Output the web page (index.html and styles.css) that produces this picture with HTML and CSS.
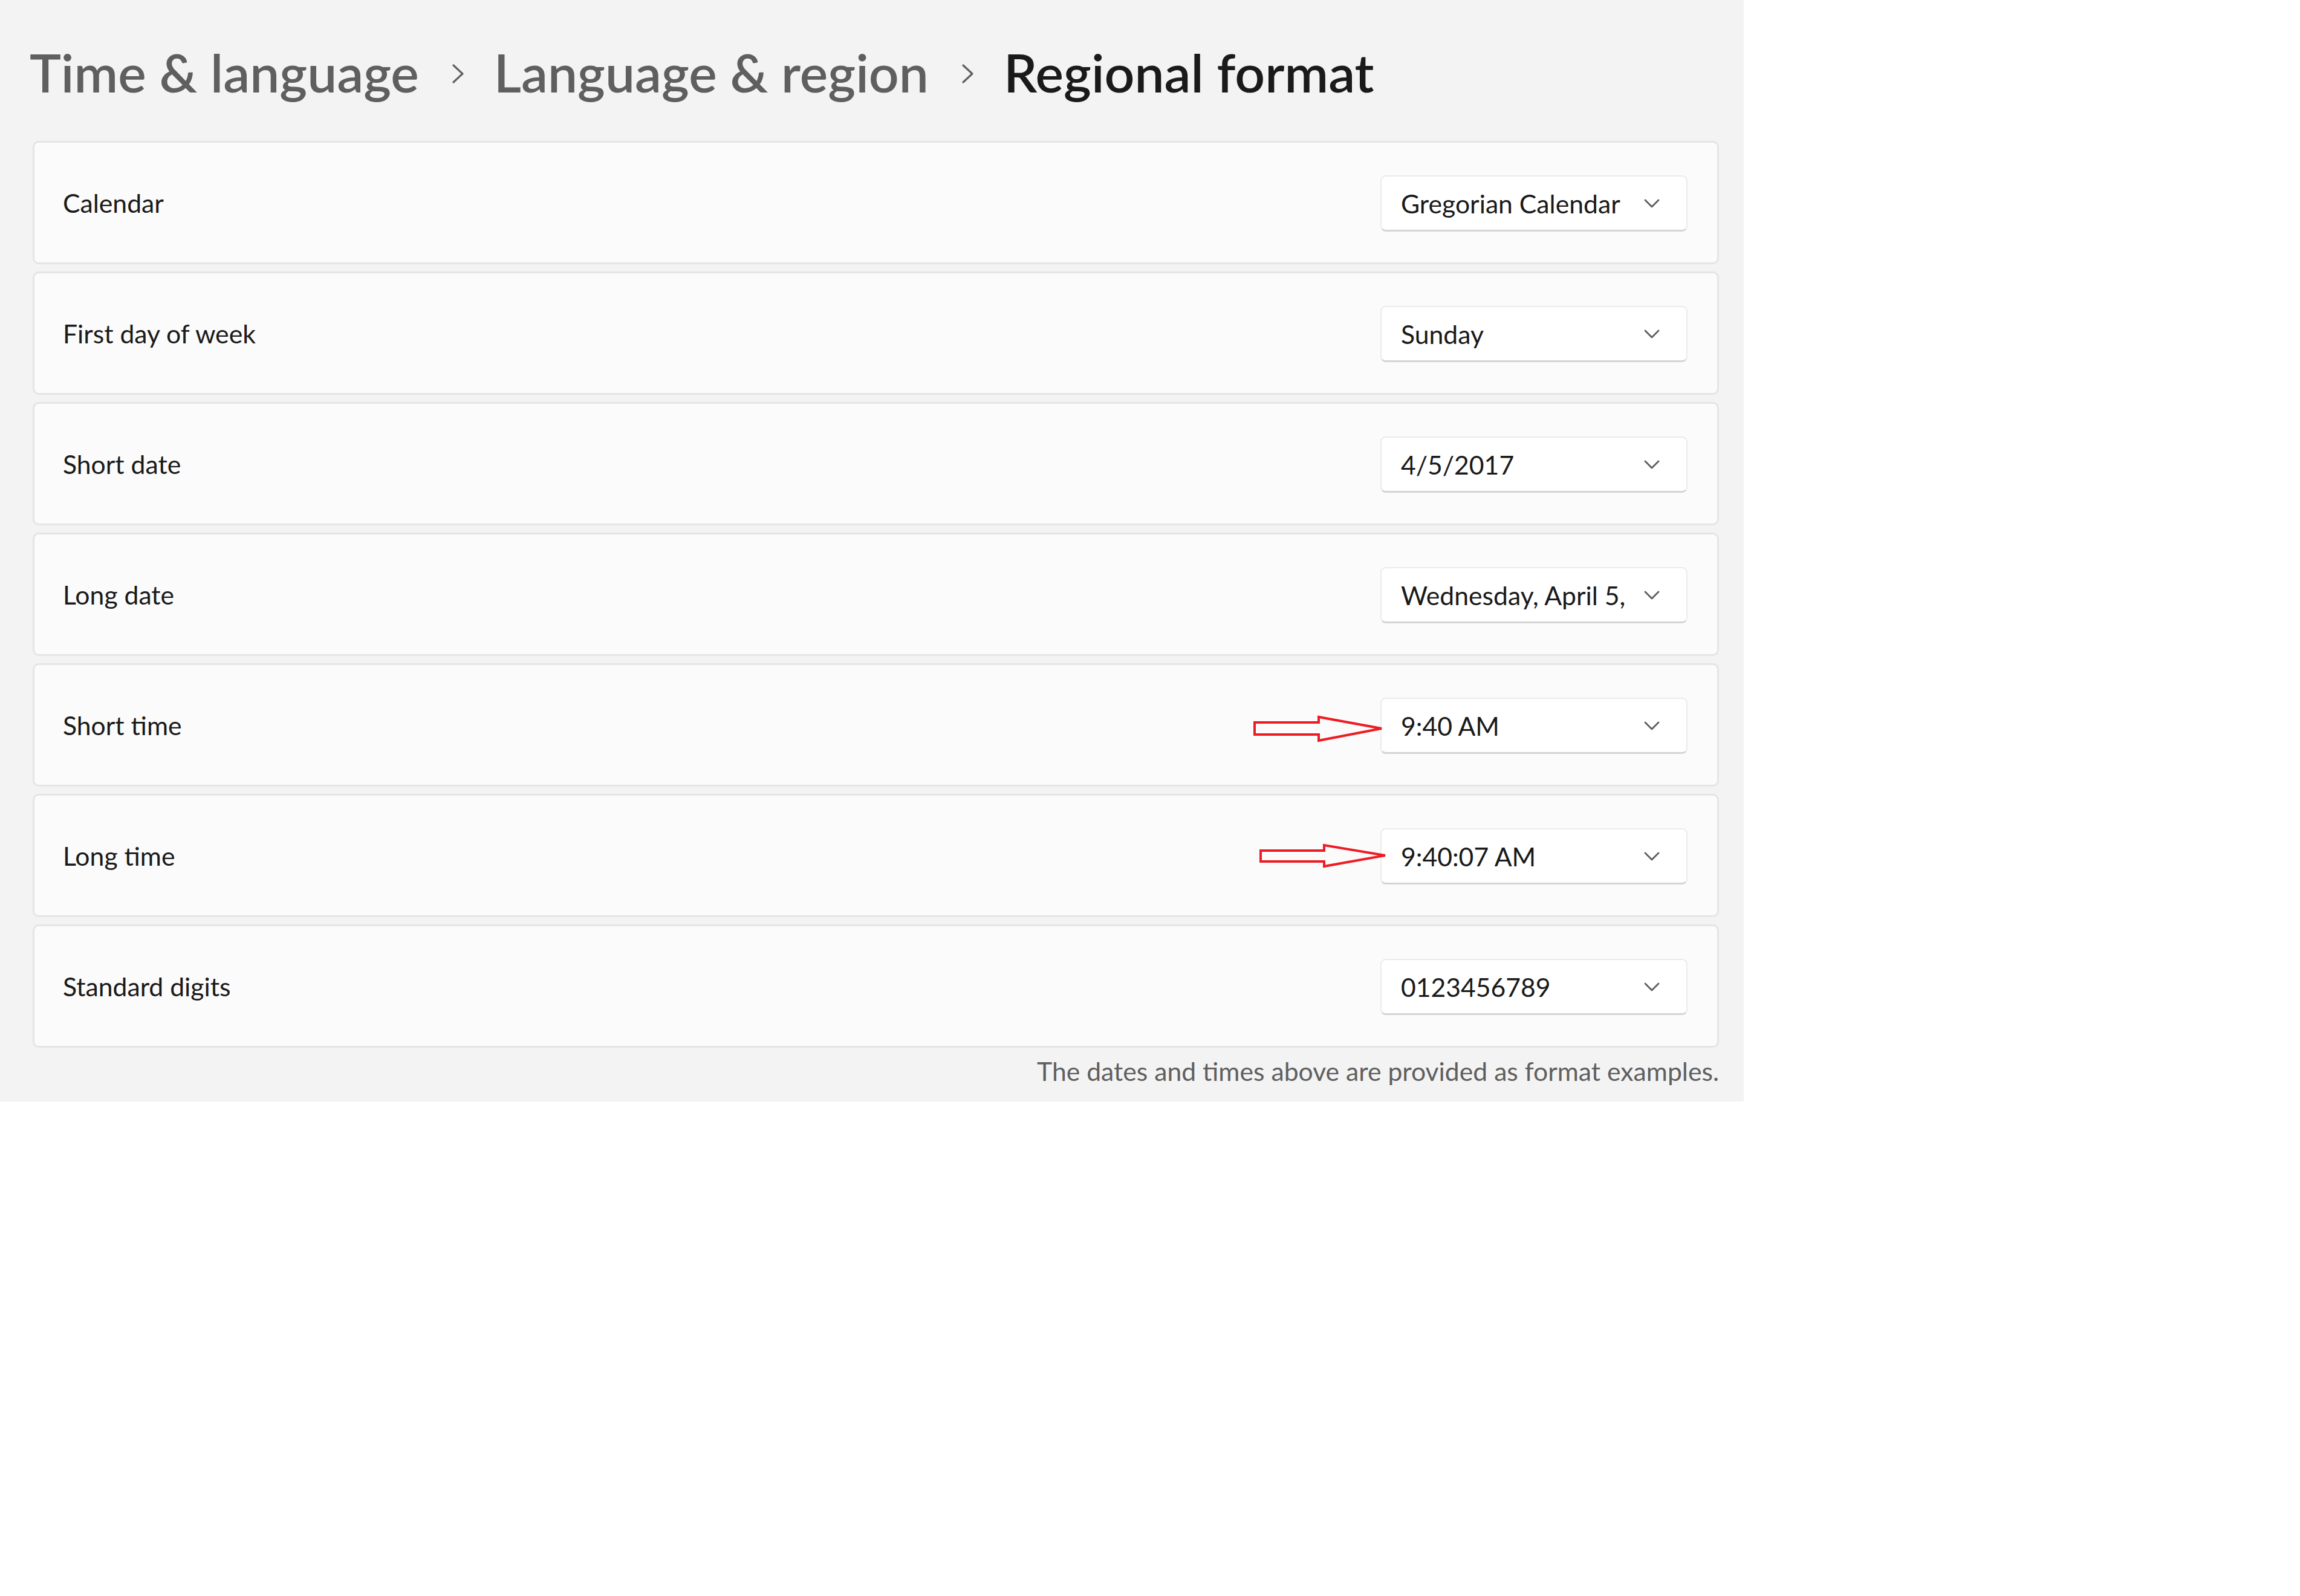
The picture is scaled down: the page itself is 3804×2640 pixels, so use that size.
FILE: index.html
```html
<!DOCTYPE html>
<html lang="en">
<head>
    <meta charset="UTF-8">
    <title>Regional format</title>
    <link rel="stylesheet" href="styles.css">
</head>
<body>
    <div class="settings">
        <nav class="breadcrumb">
            <span class="crumb">Time &amp; language</span>
            <svg class="crumb-sep" viewBox="0 0 22 34"><polyline points="3,3 18,17 3,31"/></svg>
            <span class="crumb">Language &amp; region</span>
            <svg class="crumb-sep" viewBox="0 0 22 34"><polyline points="3,3 18,17 3,31"/></svg>
            <span class="crumb current">Regional format</span>
        </nav>

        <div class="card-list">
            <div class="card">
                <span class="card-label">Calendar</span>
                <div class="combo">
                    <span class="combo-value">Gregorian Calendar</span>
                    <svg class="combo-chevron" viewBox="0 0 26 15"><polyline points="2,2 13,13 24,2"/></svg>
                </div>
            </div>
            <div class="card">
                <span class="card-label">First day of week</span>
                <div class="combo">
                    <span class="combo-value">Sunday</span>
                    <svg class="combo-chevron" viewBox="0 0 26 15"><polyline points="2,2 13,13 24,2"/></svg>
                </div>
            </div>
            <div class="card">
                <span class="card-label">Short date</span>
                <div class="combo">
                    <span class="combo-value">4/5/2017</span>
                    <svg class="combo-chevron" viewBox="0 0 26 15"><polyline points="2,2 13,13 24,2"/></svg>
                </div>
            </div>
            <div class="card">
                <span class="card-label">Long date</span>
                <div class="combo">
                    <span class="combo-value">Wednesday, April 5, 2017</span>
                    <svg class="combo-chevron" viewBox="0 0 26 15"><polyline points="2,2 13,13 24,2"/></svg>
                </div>
            </div>
            <div class="card">
                <span class="card-label">Short time</span>
                <!-- annotation arrow -->
                <svg class="arrow arrow-short" viewBox="0 0 224 52"><polygon points="6,15 112,15 112,6 216,25 112,45 112,35 6,35"/></svg>
                <div class="combo">
                    <span class="combo-value">9:40 AM</span>
                    <svg class="combo-chevron" viewBox="0 0 26 15"><polyline points="2,2 13,13 24,2"/></svg>
                </div>
            </div>
            <div class="card">
                <span class="card-label">Long time</span>
                <svg class="arrow arrow-long" viewBox="0 0 220 50"><polygon points="6,17 111,17 111,8 212,25 111,43 111,35 6,35"/></svg>
                <div class="combo">
                    <span class="combo-value">9:40:07 AM</span>
                    <svg class="combo-chevron" viewBox="0 0 26 15"><polyline points="2,2 13,13 24,2"/></svg>
                </div>
            </div>
            <div class="card">
                <span class="card-label">Standard digits</span>
                <div class="combo">
                    <span class="combo-value">0123456789</span>
                    <svg class="combo-chevron" viewBox="0 0 26 15"><polyline points="2,2 13,13 24,2"/></svg>
                </div>
            </div>
        </div>

        <p class="note">The dates and times above are provided as format examples.</p>
    </div>
</body>
</html>
```

FILE: styles.css
```css
:root {
    --panel: #f3f3f3;
    --card: #fbfbfb;
    --card-border: #e5e5e5;
    --text: #1a1a1a;
    --muted: #5f5f5f;
    --annotation: #ed1c24;
}

body {
    margin: 0;
    background: #ffffff;
    font-family: Lato, "Noto Sans", sans-serif;
    color: var(--text);
}

.settings {
    width: 2884px;
    box-sizing: border-box;
    background: var(--panel);
    padding: 63px 41px 22px 54px;
}

.breadcrumb {
    display: flex;
    align-items: center;
    height: 113px;
    margin: 0 0 57px -5px;
    font-size: 87.5px;
    font-weight: 600;
    line-height: 113px;
    color: var(--muted);
    white-space: nowrap;
}

.crumb.current {
    color: var(--text);
}

.crumb-sep {
    width: 22px;
    height: 34px;
    margin: 4px 48px 0 54px;
    fill: none;
    stroke: #606060;
    stroke-width: 3.2;
    stroke-linecap: round;
    stroke-linejoin: round;
}

.card-list {
    display: flex;
    flex-direction: column;
    gap: 12px;
}

.card {
    position: relative;
    display: flex;
    align-items: center;
    justify-content: space-between;
    box-sizing: border-box;
    height: 204px;
    padding: 0 49px 0 47px;
    background: var(--card);
    border: 3px solid var(--card-border);
    border-radius: 10px;
    font-size: 42.7px;
    line-height: 57px;
}

.combo {
    display: flex;
    align-items: center;
    box-sizing: border-box;
    width: 508px;
    height: 93px;
    margin-top: 3px;
    padding: 0 44px 0 32px;
    background: #ffffff;
    border: 2px solid #ebebeb;
    border-bottom: 3px solid #d4d4d4;
    border-radius: 9px;
}

.combo-value {
    flex: 1;
    overflow: hidden;
    white-space: nowrap;
}

.combo-chevron {
    width: 26px;
    height: 15px;
    margin-left: 22px;
    fill: none;
    stroke: #5c5c5c;
    stroke-width: 2.8;
    stroke-linecap: round;
    stroke-linejoin: round;
}

.arrow {
    position: absolute;
    fill: none;
    stroke: var(--annotation);
    stroke-width: 4;
    stroke-linejoin: miter;
}

.arrow-short {
    left: 2012px;
    top: 80px;
    width: 224px;
    height: 52px;
}

.arrow-long {
    left: 2022px;
    top: 74px;
    width: 220px;
    height: 50px;
}

.note {
    margin: 10px 0 0;
    text-align: right;
    font-size: 42.7px;
    line-height: 57px;
    color: var(--muted);
}
```
